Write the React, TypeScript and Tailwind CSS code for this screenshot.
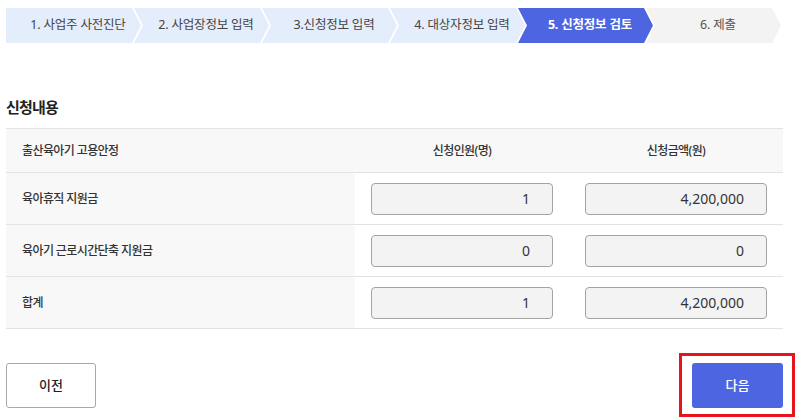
import React from "react";

const steps = [
  { label: "1. 사업주 사전진단", state: "done" },
  { label: "2. 사업장정보 입력", state: "done" },
  { label: "3.신청정보 입력", state: "done" },
  { label: "4. 대상자정보 입력", state: "done" },
  { label: "5. 신청정보 검토", state: "active" },
  { label: "6. 제출", state: "todo" },
];

const rows = [
  { label: "육아휴직 지원금", count: "1", amount: "4,200,000" },
  { label: "육아기 근로시간단축 지원금", count: "0", amount: "0" },
  { label: "합계", count: "1", amount: "4,200,000" },
];

const firstClip =
  "[clip-path:polygon(0_0,calc(100%_-_9px)_0,100%_50%,calc(100%_-_9px)_100%,0_100%)]";
const chevronClip =
  "[clip-path:polygon(0_0,calc(100%_-_9px)_0,100%_50%,calc(100%_-_9px)_100%,0_100%,9px_50%)]";

function Stepper() {
  return (
    <div className="flex h-[35px]">
      {steps.map((s, i) => {
        const color =
          s.state === "active"
            ? "bg-[#4d65e0] text-white font-bold"
            : s.state === "done"
              ? "bg-[#e3edfc] text-[#444]"
              : "bg-[#f3f3f3] text-[#555]";
        return (
          <div
            key={s.label}
            className={`flex w-[135px] shrink-0 items-center justify-center pl-[9px] text-[12.5px] tracking-[-0.2px] ${
              i === 0 ? firstClip : `${chevronClip} ml-[-7px]`
            } ${color}`}
          >
            {s.label}
          </div>
        );
      })}
    </div>
  );
}

function ReadonlyBox({ value }: { value: string }) {
  return (
    <div className="flex h-[32px] w-full items-center justify-end rounded-[4px] border border-[#a3a3a3] bg-[#f3f3f3] pr-[22px] text-[14px] text-[#333]">
      {value}
    </div>
  );
}

export default function App() {
  return (
    <div className="relative h-[420px] w-[800px] overflow-hidden bg-white font-['Noto_Sans','Noto_Sans_CJK_KR',sans-serif] text-[#222]">
      <div className="pl-[6px] pr-[17px] pt-[8px]">
        <Stepper />

        <h2 className="mt-[53px] text-[15px] font-bold leading-[22px] tracking-[-0.8px] text-[#222]">
          신청내용
        </h2>

        {/* Application table */}
        <div className="mt-[10px] border-t border-b border-[#e3e3e3]">
          <div className="grid h-[43px] grid-cols-[349px_214px_214px] items-center bg-[#f8f8f8] text-[12px] font-medium tracking-[-0.6px] text-[#333]">
            <div className="pl-[16px]">출산육아기 고용안정</div>
            <div className="text-center">신청인원(명)</div>
            <div className="text-center">신청금액(원)</div>
          </div>
          {rows.map((r) => (
            <div
              key={r.label}
              className="grid h-[52px] grid-cols-[349px_214px_214px] border-t border-[#e3e3e3]"
            >
              <div className="flex items-center bg-[#f8f8f8] pl-[16px] text-[12px] font-medium tracking-[-0.6px] text-[#333]">
                {r.label}
              </div>
              <div className="flex items-center px-4">
                <ReadonlyBox value={r.count} />
              </div>
              <div className="flex items-center px-4">
                <ReadonlyBox value={r.amount} />
              </div>
            </div>
          ))}
        </div>

        <div className="mt-[34px] flex justify-between">
          <button className="h-[45px] w-[90px] rounded-[3px] border border-[#a8a8a8] bg-white text-[13px] font-medium text-[#222]">
            이전
          </button>
          <div className="relative">
            <button className="h-[45px] w-[91px] rounded-[3px] bg-[#4d65e0] text-[13px] font-medium text-white">
              다음
            </button>
            <div className="pointer-events-none absolute -bottom-[9px] -left-[13px] -right-[12px] -top-[10px] border-[3px] border-[#e8141c]" />
          </div>
        </div>
      </div>
    </div>
  );
}
